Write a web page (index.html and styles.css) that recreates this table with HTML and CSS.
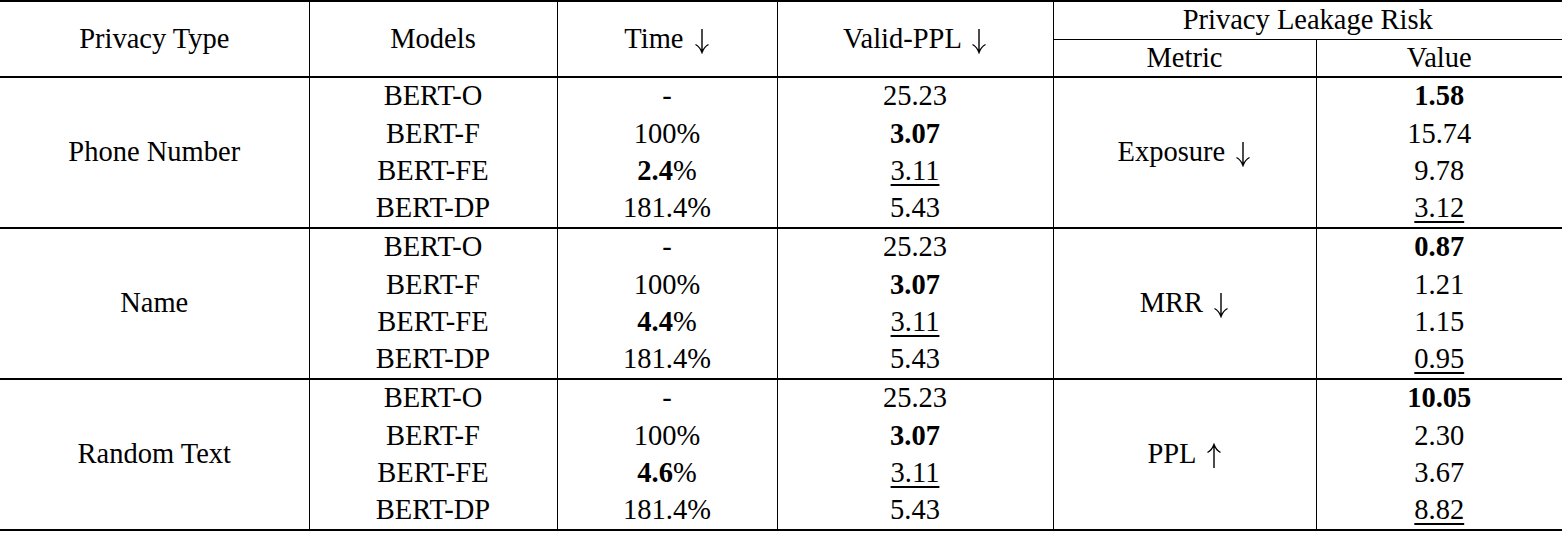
FILE: index.html
```html
<!DOCTYPE html>
<html lang="en">
<head>
    <meta charset="UTF-8">
    <meta name="viewport" content="width=device-width, initial-scale=1.0">
    <title>Privacy Leakage Results</title>
    <link rel="stylesheet" href="styles.css">
</head>
<body>
    <table class="results">
        <colgroup>
            <col class="col-type">
            <col class="col-model">
            <col class="col-time">
            <col class="col-ppl">
            <col class="col-metric">
            <col class="col-value">
        </colgroup>
        <thead>
            <tr class="top-head">
                <th rowspan="2">Privacy Type</th>
                <th rowspan="2">Models</th>
                <th rowspan="2">Time <svg class="arrow" viewBox="0 0 16 26"><path d="M8 1V24M1.5 16.5Q6 19 8 24.5Q10 19 14.5 16.5"/></svg></th>
                <th rowspan="2">Valid-PPL <svg class="arrow" viewBox="0 0 16 26"><path d="M8 1V24M1.5 16.5Q6 19 8 24.5Q10 19 14.5 16.5"/></svg></th>
                <th colspan="2" class="span-head">Privacy Leakage Risk</th>
            </tr>
            <tr class="sub-head">
                <th>Metric</th>
                <th>Value</th>
            </tr>
        </thead>
        <tbody>
            <tr>
                <td rowspan="4">Phone Number</td>
                <td>BERT-O</td>
                <td>-</td>
                <td>25.23</td>
                <td rowspan="4">Exposure <svg class="arrow" viewBox="0 0 16 26"><path d="M8 1V24M1.5 16.5Q6 19 8 24.5Q10 19 14.5 16.5"/></svg></td>
                <td><b>1.58</b></td>
            </tr>
            <tr>
                <td>BERT-F</td>
                <td>100%</td>
                <td><b>3.07</b></td>
                <td>15.74</td>
            </tr>
            <tr>
                <td>BERT-FE</td>
                <td><b>2.4</b>%</td>
                <td><span class="second">3.11</span></td>
                <td>9.78</td>
            </tr>
            <tr>
                <td>BERT-DP</td>
                <td>181.4%</td>
                <td>5.43</td>
                <td><span class="second">3.12</span></td>
            </tr>
        </tbody>
        <tbody>
            <tr>
                <td rowspan="4">Name</td>
                <td>BERT-O</td>
                <td>-</td>
                <td>25.23</td>
                <td rowspan="4">MRR <svg class="arrow" viewBox="0 0 16 26"><path d="M8 1V24M1.5 16.5Q6 19 8 24.5Q10 19 14.5 16.5"/></svg></td>
                <td><b>0.87</b></td>
            </tr>
            <tr>
                <td>BERT-F</td>
                <td>100%</td>
                <td><b>3.07</b></td>
                <td>1.21</td>
            </tr>
            <tr>
                <td>BERT-FE</td>
                <td><b>4.4</b>%</td>
                <td><span class="second">3.11</span></td>
                <td>1.15</td>
            </tr>
            <tr>
                <td>BERT-DP</td>
                <td>181.4%</td>
                <td>5.43</td>
                <td><span class="second">0.95</span></td>
            </tr>
        </tbody>
        <tbody>
            <tr>
                <td rowspan="4">Random Text</td>
                <td>BERT-O</td>
                <td>-</td>
                <td>25.23</td>
                <td rowspan="4">PPL <svg class="arrow up" viewBox="0 0 16 26"><path d="M8 1V24M1.5 16.5Q6 19 8 24.5Q10 19 14.5 16.5"/></svg></td>
                <td><b>10.05</b></td>
            </tr>
            <tr>
                <td>BERT-F</td>
                <td>100%</td>
                <td><b>3.07</b></td>
                <td>2.30</td>
            </tr>
            <tr>
                <td>BERT-FE</td>
                <td><b>4.6</b>%</td>
                <td><span class="second">3.11</span></td>
                <td>3.67</td>
            </tr>
            <tr>
                <td>BERT-DP</td>
                <td>181.4%</td>
                <td>5.43</td>
                <td><span class="second">8.82</span></td>
            </tr>
        </tbody>
    </table>
</body>
</html>
```

FILE: styles.css
```css
body {
    margin: 0;
    background: #fff;
    color: #000;
    font-family: "Liberation Serif", "Times New Roman", serif;
}

.results {
    border-collapse: collapse;
    table-layout: fixed;
    width: 1562px;
    font-size: 28.5px;
    line-height: 1;
}

.col-type { width: 309px; }
.col-model { width: 248px; border-left: 1px solid #000; }
.col-time { width: 220px; border-left: 1px solid #000; }
.col-ppl { width: 276px; border-left: 1px solid #000; }
.col-metric { width: 263px; border-left: 1px solid #000; }
.col-value { width: 246px; border-left: 1px solid #000; }

.results th,
.results td {
    font-weight: normal;
    text-align: center;
    vertical-align: middle;
    padding: 0;
    height: 37.25px;
}

.top-head th {
    height: 37px;
}

.sub-head th {
    height: 36px;
}

.results thead {
    border-top: 2px solid #000;
    border-bottom: 2px solid #000;
}

.results tbody {
    border-bottom: 2px solid #000;
}

.span-head {
    border-bottom: 1px solid #000;
}

.results b {
    font-weight: bold;
}

.second {
    text-decoration: underline;
    text-decoration-thickness: 1.5px;
    text-underline-offset: 4px;
}

.arrow {
    width: 16px;
    height: 26px;
    margin-left: 3px;
    vertical-align: -6px;
    fill: none;
    stroke: #000;
    stroke-width: 1.4;
}

.arrow.up {
    transform: rotate(180deg);
}
```
